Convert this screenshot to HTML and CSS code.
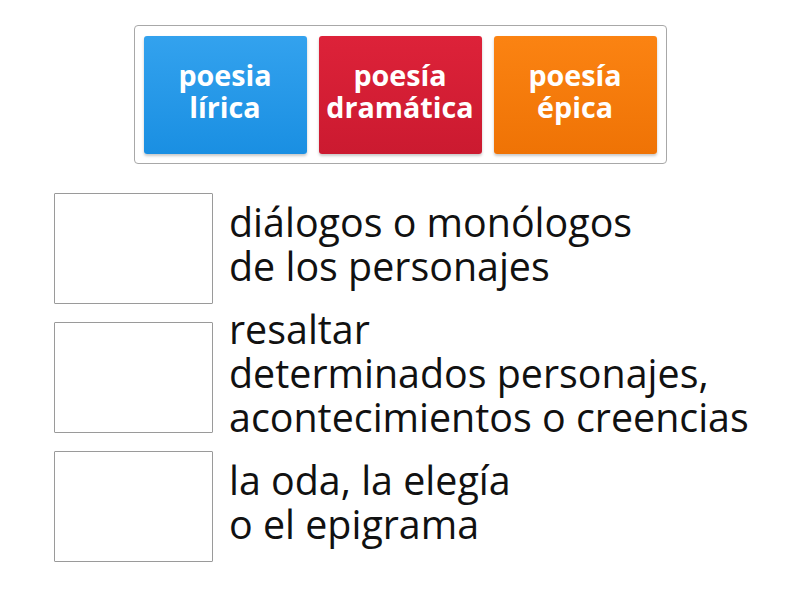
FILE: index.html
```html
<!DOCTYPE html>
<html lang="es">
<head>
<meta charset="utf-8">
<link rel="stylesheet" href="styles.css">
</head>
<body>
<div class="page">
  <div class="bank">
    <div class="tile tile-blue">poesia<br>lírica</div>
    <div class="tile tile-red">poesía<br>dramática</div>
    <div class="tile tile-orange">poesía<br>épica</div>
  </div>
  <div class="rows">
    <div class="row">
      <div class="slot"></div>
      <div class="label">diálogos o monólogos<br>de los personajes</div>
    </div>
    <div class="row">
      <div class="slot"></div>
      <div class="label">resaltar<br>determinados personajes,<br>acontecimientos o creencias</div>
    </div>
    <div class="row">
      <div class="slot"></div>
      <div class="label">la oda, la elegía<br>o el epigrama</div>
    </div>
  </div>
</div>
</body>
</html>
```

FILE: styles.css
```css
html, body {
  margin: 0;
  padding: 0;
  background: #ffffff;
}
body {
  font-family: "Open Sans", "Liberation Sans", sans-serif;
  width: 800px;
  height: 600px;
  overflow: hidden;
}
.page {
  padding-top: 25px;
}
.bank {
  width: 513px;
  margin: 0 auto;
  padding: 10px 9px 9px 9px;
  border: 1px solid #a8a8a8;
  border-radius: 4px;
  display: flex;
  gap: 12px;
}
.tile {
  box-sizing: border-box;
  width: 163px;
  height: 118px;
  padding-bottom: 8px;
  border-radius: 3px;
  color: #ffffff;
  font-weight: 700;
  font-size: 28.7px;
  line-height: 32px;
  text-align: center;
  display: flex;
  align-items: center;
  justify-content: center;
  box-shadow: 0 2px 3px rgba(0,0,0,0.22);
}
.tile-blue {
  background: linear-gradient(#33a2ee, #1a8fe2);
}
.tile-red {
  background: linear-gradient(#dd2239, #cb1a30);
}
.tile-orange {
  background: linear-gradient(#fb8312, #ef7305);
}
.rows {
  margin-top: 29px;
  padding-left: 54px;
  display: flex;
  flex-direction: column;
  gap: 18px;
}
.row {
  height: 111px;
  display: flex;
  align-items: center;
  gap: 16px;
}
.slot {
  width: 157px;
  height: 109px;
  border: 1px solid #9a9a9a;
  border-radius: 1px;
  flex: none;
}
.label {
  font-size: 39.4px;
  line-height: 44px;
  color: #111111;
  white-space: nowrap;
  margin-bottom: 10px;
}
```
